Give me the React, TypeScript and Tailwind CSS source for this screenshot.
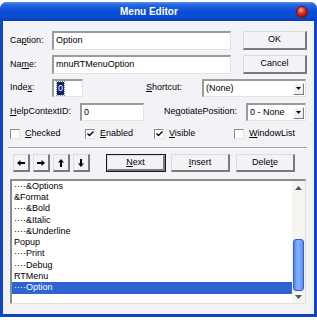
import type { ReactNode } from "react";

const items = [
  "····&Options",
  "&Format",
  "····&Bold",
  "····&Italic",
  "····&Underline",
  "Popup",
  "····Print",
  "····Debug",
  "RTMenu",
  "····Option",
];

function Acc({ text }: { text: string }) {
  const i = text.indexOf("&");
  if (i < 0) return <>{text}</>;
  return (
    <>
      {text.slice(0, i)}
      <span className="underline underline-offset-[1px]">{text[i + 1]}</span>
      {text.slice(i + 2)}
    </>
  );
}

function Field({ width, children }: { width: string; children?: ReactNode }) {
  return (
    <div className={`flex h-full items-center border-t-2 border-l-2 border-r border-b border-t-[#9a9a9a] border-l-[#9a9a9a] border-r-[#e2e2e2] border-b-[#e2e2e2] bg-white pl-[2px] ${width}`}>
      {children}
    </div>
  );
}

function Combo({ width, value }: { width: string; value: string }) {
  return (
    <div className={`flex h-full items-center border-t-2 border-l-2 border-r border-b border-t-[#9a9a9a] border-l-[#9a9a9a] border-r-[#e2e2e2] border-b-[#e2e2e2] bg-white pl-[2px] ${width}`}>
      <span className="flex-1">{value}</span>
      <div className="mr-[1px] flex h-[12px] w-[11px] items-center justify-center border-t border-l border-r border-b border-t-white border-l-white border-r-[#7c7c7c] border-b-[#7c7c7c] bg-[#f0f0f4]">
        <svg width="5" height="3" viewBox="0 0 5 3"><path d="M0 0h5L2.5 3z" fill="#000" /></svg>
      </div>
    </div>
  );
}

function Button({ width, children, isDefault }: { width: string; children: ReactNode; isDefault?: boolean }) {
  return (
    <div className={`h-full ${width} ${isDefault ? "border border-[#1a1a1a]" : ""}`}>
      <div className="flex h-full items-center justify-center border-t border-l border-r-2 border-b-2 border-t-[#dcdcdc] border-l-[#dcdcdc] border-r-[#7a7a7a] border-b-[#7a7a7a] bg-[#f3f3f7]">
        {children}
      </div>
    </div>
  );
}

function Check({ checked, label, className }: { checked?: boolean; label: string; className: string }) {
  return (
    <div className={`flex items-center ${className}`}>
      <div className="flex h-[10px] w-[10px] items-center justify-center border-t border-l border-t-[#8a8a8a] border-l-[#8a8a8a] border-r border-b border-r-[#e4e4e4] border-b-[#e4e4e4] bg-white">
        {checked ? (
          <svg width="7" height="6" viewBox="0 0 7 6"><path d="M0.5 2.5L2.5 4.5L6.5 0.5" stroke="#000" strokeWidth="1.4" fill="none" /></svg>
        ) : null}
      </div>
      <span className="ml-[5px]"><Acc text={label} /></span>
    </div>
  );
}

function Arrow({ d }: { d: string }) {
  return (
    <Button width="w-[17px]">
      <svg width="8" height="8" viewBox="0 0 8 8"><path d={d} fill="#000" /></svg>
    </Button>
  );
}

export default function App() {
  return (
    <div className="h-[320px] w-[317px] bg-white pt-[2px] font-['Liberation_Sans',Arial,sans-serif] text-[9px] text-black">
      <div className="flex h-[315px] flex-col rounded-t-[7px] bg-[#0d46c6] px-[3px] pb-[3px]">
        <div className="-mx-[3px] flex h-[19px] items-center rounded-t-[7px] bg-[linear-gradient(to_bottom,#5a94f0_0%,#2a67df_14%,#0b50d6_45%,#0a4cd2_78%,#0a3eb0_100%)]">
          <span className="ml-[120px] text-[10px] font-bold text-white">Menu Editor</span>
          <div className="flex-1" />
          <div className="mr-[9px] h-[12px] w-[12px] rounded-full border border-[#7a1010] bg-[radial-gradient(circle_at_40%_30%,#ffb0a0_0%,#e03a2a_35%,#b01010_70%,#6a0505_100%)]" />
        </div>

        <div className="flex flex-1 flex-col bg-[#f3f3f7] pl-[7px]">
          <div className="mt-[10px] flex h-[19px] items-center">
            <span className="w-[42px]"><Acc text="Ca&ption:" /></span>
            <Field width="w-[179px]">Option</Field>
            <div className="ml-[12px] h-[19px] w-[64px]"><Button width="w-[64px]">OK</Button></div>
          </div>

          <div className="mt-[5px] flex h-[19px] items-center">
            <span className="w-[42px]"><Acc text="Na&me:" /></span>
            <Field width="w-[179px]">mnuRTMenuOption</Field>
            <div className="ml-[12px] h-[19px] w-[64px]"><Button width="w-[64px]">Cancel</Button></div>
          </div>

          <div className="mt-[5px] flex h-[18px] items-center">
            <span className="w-[42px]"><Acc text="Inde&x:" /></span>
            <Field width="w-[31px]">
              <span className="ml-[1px] bg-[#0a246a] px-[1px] text-white outline outline-1 outline-dotted outline-[#888]">0</span>
            </Field>
            <span className="ml-[63px] w-[56px]"><Acc text="&Shortcut:" /></span>
            <Combo width="w-[104px]" value="(None)" />
          </div>

          <div className="mt-[6px] flex h-[18px] items-center">
            <span className="w-[70px]"><Acc text="&HelpContextID:" /></span>
            <Field width="w-[64px]">0</Field>
            <span className="ml-[20px] w-[82px]"><Acc text="Ne&gotiatePosition:" /></span>
            <Combo width="w-[60px]" value="0 - None" />
          </div>

          <div className="mt-[7px] flex h-[12px] items-center">
            <Check label="&Checked" className="ml-[0px] w-[75px]" />
            <Check checked label="&Enabled" className="w-[69px]" />
            <Check checked label="&Visible" className="w-[80px]" />
            <Check label="&WindowList" className="" />
          </div>

          <div className="mt-[7px] mr-[7px] -ml-[2px] border-t border-b border-t-[#a0a0a8] border-b-white" />

          <div className="mt-[5px] flex h-[18px] items-center">
            <div className="ml-[3px] flex h-full gap-[3px]">
              <Arrow d="M0 4L3.5 1V3H8V5H3.5V7z" />
              <Arrow d="M8 4L4.5 1V3H0V5H4.5V7z" />
              <Arrow d="M4 0L7 3.5H5V8H3V3.5H1z" />
              <Arrow d="M4 8L7 4.5H5V0H3V4.5H1z" />
            </div>
            <div className="ml-[16px] h-full w-[60px]"><Button isDefault width="w-[60px]"><Acc text="&Next" /></Button></div>
            <div className="ml-[5px] h-full w-[59px]"><Button width="w-[59px]"><Acc text="&Insert" /></Button></div>
            <div className="ml-[6px] h-full w-[59px]"><Button width="w-[59px]"><Acc text="Dele&te" /></Button></div>
          </div>

          <div className="mt-[7px] flex h-[125px] w-[296px] border-t-2 border-l-2 border-r border-b border-t-[#8c8c8c] border-l-[#8c8c8c] border-r-[#e0e0e0] border-b-[#e0e0e0] bg-white">
            <div className="flex flex-1 flex-col">
              {items.map((item, i) => (
                <div
                  key={item}
                  className={`flex h-[11.25px] items-center pl-[2px] ${i === items.length - 1 ? "bg-[#2f63cf] text-white" : ""}`}
                >
                  {item.replace("&", "&")}
                </div>
              ))}
            </div>
            <div className="flex w-[13px] flex-col bg-[#f4f4f0]">
              <div className="flex h-[13px] items-center justify-center">
                <svg width="7" height="4" viewBox="0 0 7 4"><path d="M0 4L3.5 0L7 4z" fill="#4d5a78" /></svg>
              </div>
              <div className="flex-1" />
              <div className="mx-[1px] h-[52px] rounded-[3px] border border-[#2f5fd8] bg-[linear-gradient(to_right,#4f86f0,#8ab2ff_45%,#5b8ef2)]" />
              <div className="flex h-[12px] items-center justify-center">
                <svg width="7" height="4" viewBox="0 0 7 4"><path d="M0 0L3.5 4L7 0z" fill="#4d5a78" /></svg>
              </div>
            </div>
          </div>
        </div>
      </div>
    </div>
  );
}
